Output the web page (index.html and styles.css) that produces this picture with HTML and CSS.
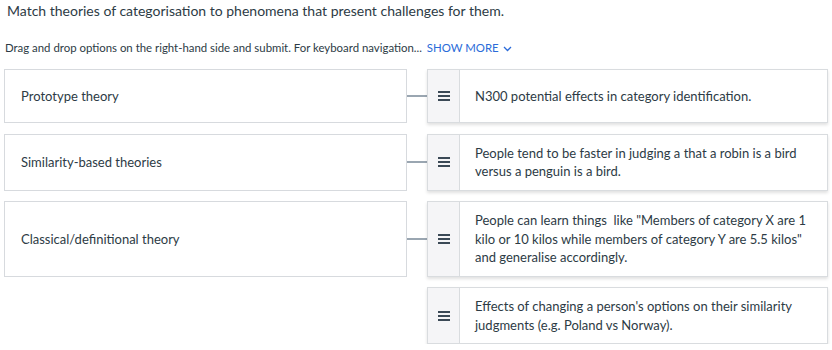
FILE: index.html
```html
<!DOCTYPE html>
<html lang="en">
<head>
  <meta charset="UTF-8" />
  <meta name="viewport" content="width=device-width, initial-scale=1.0" />
  <title>Match theories</title>
  <link rel="stylesheet" href="styles.css">
</head>
<body>
  <div class="match-container">
    <p class="match-question">Match theories of categorisation to phenomena that present challenges for them.</p>
    <p class="match-hint">
      Drag and drop options on the right-hand side and submit. For keyboard navigation...
      <a href="#" class="match-more">SHOW MORE
        <svg width="9" height="6" viewBox="0 0 9 6"><path d="M1 1 L4.5 4.5 L8 1" fill="none" stroke="currentColor" stroke-width="1.3"/></svg>
      </a>
    </p>

    <!-- Matching rows -->
    <div class="match-grid">
      <div class="match-prompt">Prototype theory</div>
      <div class="match-link"></div>
      <div class="match-option">
        <div class="match-handle"><span></span><span></span><span></span></div>
        <div class="match-text">N300 potential effects in category identification.</div>
      </div>

      <div class="match-prompt">Similarity-based theories</div>
      <div class="match-link"></div>
      <div class="match-option">
        <div class="match-handle"><span></span><span></span><span></span></div>
        <div class="match-text">People tend to be faster in judging a that a robin is a bird versus a penguin is a bird.</div>
      </div>

      <div class="match-prompt">Classical/definitional theory</div>
      <div class="match-link"></div>
      <div class="match-option">
        <div class="match-handle"><span></span><span></span><span></span></div>
        <div class="match-text">People can learn things &nbsp;like "Members of category X are 1 kilo or 10 kilos while members of category Y are 5.5 kilos" and generalise accordingly.</div>
      </div>

      <div class="match-empty"></div>
      <div class="match-empty"></div>
      <div class="match-option">
        <div class="match-handle"><span></span><span></span><span></span></div>
        <div class="match-text">Effects of changing a person's options on their similarity judgments (e.g. Poland vs Norway).</div>
      </div>
    </div>
  </div>
</body>
</html>
```

FILE: styles.css
```css
/* Base Styles */
body {
  margin: 0;
  padding: 0;
  background: #ffffff;
  font-family: Lato, "Liberation Sans", sans-serif;
  color: #2d3b45;
}

.match-container {
  padding: 0 4px;
}

.match-question {
  margin: 0;
  padding: 2px 0 0 3px;
  font-size: 14px;
  line-height: 18px;
}

.match-hint {
  margin: 0;
  padding: 19px 0 0 1px;
  font-size: 11.4px;
  line-height: 18px;
}

.match-more {
  color: #2b6bd9;
  text-decoration: none;
  margin-left: 2px;
}

.match-more svg {
  vertical-align: middle;
  margin-left: 1px;
}

.match-grid {
  margin-top: 12px;
  display: grid;
  grid-template-columns: 403px 20px 401px;
  row-gap: 10.5px;
}

.match-prompt {
  border: 1px solid #d7dade;
  display: flex;
  align-items: center;
  padding: 0 16px;
  font-size: 13px;
}

.match-link {
  display: flex;
  align-items: center;
}

.match-link::before {
  content: "";
  display: block;
  width: 100%;
  height: 2px;
  background: #9aa6b1;
}

.match-option {
  display: flex;
  border: 1px solid #d9dcdf;
  box-shadow: 0 2px 3px rgba(0, 0, 0, 0.12);
  background: #ffffff;
  min-height: 52px;
}

.match-handle {
  width: 31px;
  background: #f5f5f7;
  border-right: 1px solid #d9dcdf;
  display: flex;
  flex-direction: column;
  justify-content: center;
  align-items: center;
  gap: 2px;
}

.match-handle span {
  display: block;
  width: 12px;
  height: 2px;
  background: #3b4956;
}

.match-text {
  flex: 1;
  display: flex;
  align-items: center;
  padding: 9px 16px 9px 15px;
  font-size: 13px;
  line-height: 18.5px;
}
```
